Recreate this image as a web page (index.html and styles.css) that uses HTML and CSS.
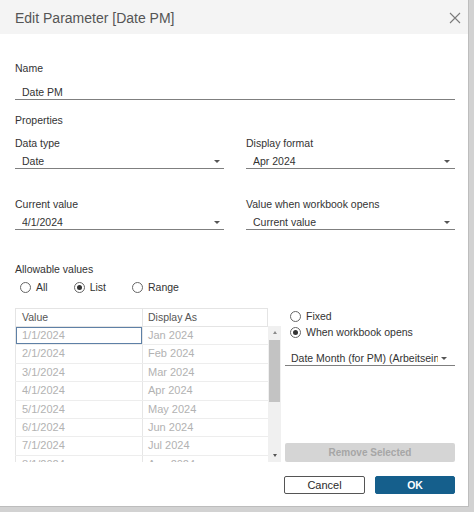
FILE: index.html
```html
<!DOCTYPE html>
<html>
<head>
<meta charset="utf-8">
<link rel="stylesheet" href="styles.css">
</head>
<body>
<div class="screen">
  <div class="dialog">
    <header class="titlebar">
      <span class="title">Edit Parameter [Date PM]</span>
      <svg class="close" width="12" height="12" viewBox="0 0 12 12"><path d="M1 1L11 11M11 1L1 11" stroke="#7a7a7a" stroke-width="1.1" fill="none"/></svg>
    </header>
    <main class="content">
      <div class="label name-label">Name</div>
      <div class="field name-field">Date PM</div>
      <div class="label section">Properties</div>

      <div class="two-col row1">
        <div class="col">
          <div class="label">Data type</div>
          <div class="field select"><span class="sel-text">Date</span><i class="caret"></i></div>
        </div>
        <div class="col">
          <div class="label">Display format</div>
          <div class="field select"><span class="sel-text">Apr 2024</span><i class="caret"></i></div>
        </div>
      </div>

      <div class="two-col row2">
        <div class="col">
          <div class="label">Current value</div>
          <div class="field select"><span class="sel-text">4/1/2024</span><i class="caret"></i></div>
        </div>
        <div class="col">
          <div class="label">Value when workbook opens</div>
          <div class="field select"><span class="sel-text">Current value</span><i class="caret"></i></div>
        </div>
      </div>

      <div class="label allow">Allowable values</div>
      <div class="radios">
        <div class="opt"><span class="radio"></span><span>All</span></div>
        <div class="opt"><span class="radio on"></span><span>List</span></div>
        <div class="opt"><span class="radio"></span><span>Range</span></div>
      </div>

      <div class="list-area">
        <div class="table">
          <div class="thead">
            <div class="th first">Value</div>
            <div class="th">Display As</div>
          </div>
          <div class="tbody">
            <div class="rows">
              <div class="tr"><div class="td first selected">1/1/2024</div><div class="td">Jan 2024</div></div>
              <div class="tr"><div class="td first">2/1/2024</div><div class="td">Feb 2024</div></div>
              <div class="tr"><div class="td first">3/1/2024</div><div class="td">Mar 2024</div></div>
              <div class="tr"><div class="td first">4/1/2024</div><div class="td">Apr 2024</div></div>
              <div class="tr"><div class="td first">5/1/2024</div><div class="td">May 2024</div></div>
              <div class="tr"><div class="td first">6/1/2024</div><div class="td">Jun 2024</div></div>
              <div class="tr"><div class="td first">7/1/2024</div><div class="td">Jul 2024</div></div>
              <div class="tr"><div class="td first">8/1/2024</div><div class="td">Aug 2024</div></div>
            </div>
            <div class="scrollbar">
              <div class="sb-btn"><i class="tri-up"></i></div>
              <div class="thumb"></div>
              <div class="sb-space"></div>
              <div class="sb-btn"><i class="tri-down"></i></div>
            </div>
          </div>
        </div>
        <div class="side">
          <div class="opt side-opt first-opt"><span class="radio"></span><span>Fixed</span></div>
          <div class="opt side-opt second-opt"><span class="radio on"></span><span>When workbook opens</span></div>
          <div class="field select side-select"><span class="sel-text clip">Date Month (for PM) (Arbeitseinsatz)</span><i class="caret"></i></div>
          <div class="btn-remove">Remove Selected</div>
        </div>
      </div>

      <div class="footer">
        <div class="btn cancel">Cancel</div>
        <div class="btn ok">OK</div>
      </div>
    </main>
  </div>
</div>
</body>
</html>
```
FILE: styles.css
```css
* { box-sizing: border-box; }
html, body { margin: 0; padding: 0; }
body { font-family: "Liberation Sans", Arial, sans-serif; color: #333; }

.screen { width: 474px; height: 512px; background: #d2d2d2; overflow: hidden; }
.dialog {
  width: 469px; height: 507px; background: #fff;
  border-right: 1px solid #bdbdbd; border-bottom: 1px solid #bdbdbd;
  display: flex; flex-direction: column;
}

.titlebar {
  height: 34px; flex: none; background: #f4f4f4;
  display: flex; align-items: center; justify-content: space-between;
  padding: 2px 7px 0 15px;
}
.title { font-size: 14px; color: #555; }
.close { display: block; }

.content { padding: 0 13px 0 15px; display: flex; flex-direction: column; }

.label { font-size: 10.5px; line-height: 14px; height: 14px; color: #333; white-space: nowrap; }
.name-label { margin-top: 27px; }
.section { margin-top: 13px; }
.allow { margin-top: 32px; }

.field {
  height: 19px; line-height: 18px; font-size: 10.5px; color: #333;
  border-bottom: 1px solid #7f7f7f; padding-left: 7px; padding-top: 2px;
}
.name-field { margin-top: 6px; }

.select { display: flex; align-items: flex-start; padding-right: 5px; }
.sel-text { flex: 1; white-space: nowrap; overflow: hidden; line-height: 18px; height: 18px; }
.caret {
  width: 0; height: 0; flex: none; margin-top: 8px;
  border-left: 3px solid transparent; border-right: 3px solid transparent;
  border-top: 3.5px solid #555;
}

.two-col { display: grid; grid-template-columns: 209px 209px; column-gap: 22px; }
.row1 { margin-top: 9px; }
.row2 { margin-top: 28px; }
.row1 .col:first-child .select, .row2 .col:first-child .select { padding-right: 4px; }
.row1 .col:last-child .select, .row2 .col:last-child .select { padding-right: 5px; padding-left: 7px; }

.radios { margin-top: 4px; height: 14px; display: flex; align-items: center; gap: 26px; padding-left: 5px; }
.opt { display: flex; align-items: center; gap: 5px; font-size: 10.5px; line-height: 14px; height: 14px; color: #333; white-space: nowrap; }
.radio {
  width: 11px; height: 11px; border: 1px solid #666; border-radius: 50%;
  display: grid; place-items: center; background: #fff; flex: none;
}
.radio.on::after { content: ""; width: 5px; height: 5px; border-radius: 50%; background: #333; }

.list-area { margin-top: 14px; height: 154px; display: flex; gap: 4px; }

.table { width: 266px; display: flex; flex-direction: column; }
.thead {
  width: 253px; height: 18px; display: grid; grid-template-columns: 127px 126px;
  border-top: 1px solid #e4e4e4; border-right: 1px solid #e4e4e4;
}
.th { font-size: 10.5px; line-height: 17px; color: #555; padding-left: 5px; border-left: 1px solid #e4e4e4; }
.th.first { padding-left: 6px; }

.tbody { display: flex; height: 136px; }
.rows { width: 253px; overflow: hidden; border-top: 1px solid #e4e4e4; }
.tr {
  height: 18.4px; display: grid; grid-template-columns: 127px 126px;
  border-bottom: 1px solid #ededed;
}
.td { font-size: 11px; line-height: 17.4px; color: #b2b2b2; padding-left: 5px; border-left: 1px solid #e6e6e6; white-space: nowrap; }
.td.first { padding-left: 6px; }
.td.selected { box-shadow: inset 0 0 0 1px #5e80a6; }

.scrollbar { width: 13px; background: #f0f0f0; display: flex; flex-direction: column; }
.sb-btn { height: 13px; display: grid; place-items: center; flex: none; }
.tri-up { width: 0; height: 0; border-left: 2.5px solid transparent; border-right: 2.5px solid transparent; border-bottom: 3px solid #8a8a8a; }
.tri-down { width: 0; height: 0; border-left: 2.5px solid transparent; border-right: 2.5px solid transparent; border-top: 3px solid #555; }
.thumb { height: 62px; margin: 1px 1.5px 0 1px; background: #c3c3c3; flex: none; }
.sb-space { flex: 1; }

.side { width: 170px; display: flex; flex-direction: column; }
.side-opt { padding-left: 5px; }
.first-opt { margin-top: 1px; }
.second-opt { margin-top: 2px; }
.side-select { margin-top: 8px; height: 19px; padding-left: 6px; padding-right: 8px; }
.side-select .caret { margin-left: 3px; }
.btn-remove {
  margin-top: auto; height: 19px; background: #d5d5d5; border-radius: 2px;
  color: #a6a6a6; font-size: 10px; font-weight: bold; line-height: 19px; text-align: center;
}

.footer { margin-top: 14px; display: flex; justify-content: flex-end; gap: 10px; }
.btn { height: 18px; border-radius: 2px; font-size: 11px; line-height: 16px; text-align: center; }
.cancel { width: 81px; border: 1px solid #555; color: #2a2a2a; background: #fff; }
.ok { width: 80px; background: #155f8c; color: #fff; font-weight: bold; font-size: 10.5px; border: 1px solid #155f8c; }
```
